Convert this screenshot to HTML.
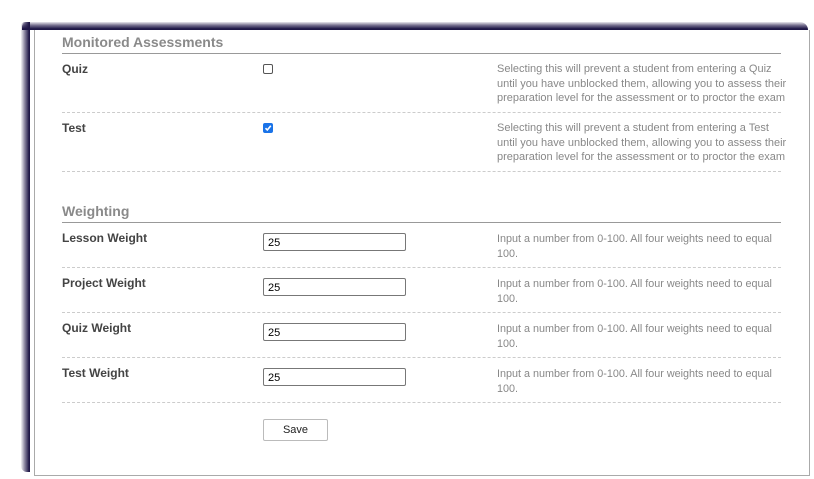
<!DOCTYPE html>
<html><head><style>
*{margin:0;padding:0;box-sizing:border-box}
body{width:814px;height:479px;background:#fff;position:relative;overflow:hidden;font-family:"Liberation Sans",Arial,sans-serif}
.a{position:absolute}
.top{left:22px;top:22px;width:786px;height:8px;background:linear-gradient(to bottom,rgba(30,20,70,0.1),rgba(30,20,70,0.6) 40%,#1e1646 85%);border-radius:6px 10px 0 0}
.left{left:21px;top:22px;width:9px;height:450px;background:linear-gradient(to right,rgba(30,20,70,0.05),rgba(30,20,70,0.5) 40%,#1e1646 90%);border-radius:4px 0 0 6px}
.panel{left:34px;top:30px;width:776px;height:446px;border:1px solid #aaa;border-top:none;background:#fff}
.h{left:62px;font-size:14px;font-weight:bold;color:#8a8a8a}
.hl{left:62px;width:719px;height:1px;background:#999}
.dl{left:62px;width:719px;border-top:1px dashed #ccc}
.lb{left:62px;font-size:12px;font-weight:bold;color:#444}
.d{left:497px;font-size:11px;line-height:14.5px;color:#888;width:290px}
.w{font-size:10.8px;width:280px}
.cb{left:263px;width:10px;height:10px;border:1px solid #555;border-radius:2px;background:#fff}
.cb.on{background:#1a73e8;border-color:#1a73e8}
.in{left:263px;width:143px;height:18px;border:1px solid #777;border-radius:2px;font-size:11px;padding:3px 0 0 4px;color:#000}
.btn{left:263px;top:419px;width:65px;height:22px;border:1px solid #bbb;border-radius:2px;font-size:11px;text-align:center;line-height:21px;color:#222}
</style></head><body>
<div class="a panel"></div>
<div class="a top"></div>
<div class="a left"></div>

<div class="a h" style="top:34px">Monitored Assessments</div>
<div class="a hl" style="top:53px"></div>
<div class="a lb" style="top:62px">Quiz</div>
<div class="a cb" style="top:64px"></div>
<div class="a d" style="top:62px">Selecting this will prevent a student from entering a Quiz until you have unblocked them, allowing you to assess their preparation level for the assessment or to proctor the exam</div>
<div class="a dl" style="top:112px"></div>
<div class="a lb" style="top:121px">Test</div>
<div class="a cb on" style="top:123px"><svg width="8" height="8" style="position:absolute;left:0;top:0"><path d="M1.5 4.2 L3.3 6 L6.8 1.8" stroke="#fff" stroke-width="1.6" fill="none"/></svg></div>
<div class="a d" style="top:121px">Selecting this will prevent a student from entering a Test until you have unblocked them, allowing you to assess their preparation level for the assessment or to proctor the exam</div>
<div class="a dl" style="top:171px"></div>

<div class="a h" style="top:203px">Weighting</div>
<div class="a hl" style="top:222px"></div>

<div class="a lb" style="top:231px">Lesson Weight</div>
<div class="a in" style="top:233px">25</div>
<div class="a d w" style="top:232px">Input a number from 0-100. All four weights need to equal 100.</div>
<div class="a dl" style="top:267px"></div>

<div class="a lb" style="top:276px">Project Weight</div>
<div class="a in" style="top:278px">25</div>
<div class="a d w" style="top:277px">Input a number from 0-100. All four weights need to equal 100.</div>
<div class="a dl" style="top:312px"></div>

<div class="a lb" style="top:321px">Quiz Weight</div>
<div class="a in" style="top:323px">25</div>
<div class="a d w" style="top:322px">Input a number from 0-100. All four weights need to equal 100.</div>
<div class="a dl" style="top:357px"></div>

<div class="a lb" style="top:366px">Test Weight</div>
<div class="a in" style="top:368px">25</div>
<div class="a d w" style="top:367px">Input a number from 0-100. All four weights need to equal 100.</div>
<div class="a dl" style="top:402px"></div>

<div class="a btn">Save</div>
</body></html>
